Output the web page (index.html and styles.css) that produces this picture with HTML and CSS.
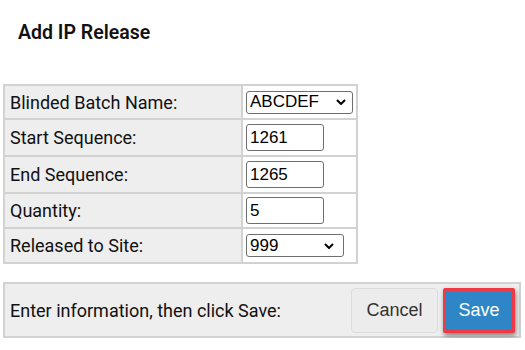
FILE: index.html
```html
<!DOCTYPE html>
<html>
<head>
<meta charset="utf-8">
<link rel="stylesheet" href="styles.css">
</head>
<body>
<h1 class="title">Add IP Release</h1>
<table class="form-table">
  <tr class="row-select">
    <td class="label">Blinded Batch Name:</td>
    <td class="field"><span class="select select-batch">ABCDEF<svg class="chev" viewBox="0 0 10 6"><path d="M1 1l4 4 4-4" fill="none" stroke="#000" stroke-width="2"/></svg></span></td>
  </tr>
  <tr class="row-input">
    <td class="label">Start Sequence:</td>
    <td class="field"><span class="input">1261</span></td>
  </tr>
  <tr class="row-input">
    <td class="label">End Sequence:</td>
    <td class="field"><span class="input">1265</span></td>
  </tr>
  <tr class="row-input2">
    <td class="label">Quantity:</td>
    <td class="field"><span class="input">5</span></td>
  </tr>
  <tr class="row-select2">
    <td class="label">Released to Site:</td>
    <td class="field"><span class="select select-site">999<svg class="chev" viewBox="0 0 10 6"><path d="M1 1l4 4 4-4" fill="none" stroke="#000" stroke-width="2"/></svg></span></td>
  </tr>
</table>
<div class="footer">
  <span class="footer-text">Enter information, then click Save:</span>
  <div class="buttons">
    <span class="btn btn-cancel">Cancel</span>
    <span class="btn btn-save">Save</span>
  </div>
</div>
</body>
</html>
```
FILE: styles.css
```css
html, body {
  margin: 0;
  padding: 0;
  background: #fff;
}
body {
  font-family: Roboto, "Liberation Sans", sans-serif;
  color: #111;
  padding-left: 3px;
}
.title {
  font-size: 19.5px;
  font-weight: 600;
  margin: 0;
  padding: 22px 0 0 15px;
  height: 84px;
  box-sizing: border-box;
  line-height: 22px;
}
.form-table {
  border-collapse: collapse;
  border: 2px solid #d2d2d2;
  width: 355px;
}
.form-table td {
  border: 2px solid #d2d2d2;
  padding: 0;
}
.label {
  background: #eeeeee;
  font-size: 18px;
  padding-left: 5px !important;
  width: 231px;
}
.field {
  background: #fff;
  padding-left: 3px !important;
}
.row-select td { height: 32px; }
.row-input td { height: 35px; }
.row-input2 td { height: 33px; }
.row-select2 td { height: 33px; }
.input, .select {
  display: flex;
  align-items: center;
  box-sizing: border-box;
  font-family: "Liberation Sans", Arial, sans-serif;
  font-size: 17px;
  color: #000;
  border: 1px solid #6f6f6f;
  border-radius: 3px;
  padding-left: 3px;
  background: #fff;
}
.input {
  width: 78px;
  height: 27px;
}
.select {
  height: 23px;
  justify-content: space-between;
  padding-right: 6px;
}
.select-batch { width: 107px; }
.select-site { width: 98px; padding-right: 9px; }
.chev {
  width: 10px;
  height: 6px;
}
.footer {
  margin-top: 18px;
  width: 518px;
  height: 56px;
  box-sizing: border-box;
  border: 2px solid #d2d2d2;
  background: #eeeeee;
  display: flex;
  align-items: center;
  justify-content: space-between;
  padding: 0 4px 0 5px;
}
.footer-text {
  font-size: 18px;
}
.buttons {
  display: flex;
  gap: 5px;
  align-items: center;
}
.btn {
  display: flex;
  align-items: center;
  justify-content: center;
  box-sizing: border-box;
  height: 45px;
  font-family: "Liberation Sans", Arial, sans-serif;
  font-size: 18px;
  border-radius: 4px;
}
.btn-cancel {
  width: 87px;
  border: 1px solid #dcdcdc;
  background: #ececec;
  color: #333;
}
.btn-save {
  width: 72px;
  background: #2e86c6;
  color: #fff;
  border: 3px solid #ee3a45;
  border-radius: 2px;
  box-shadow: 1px 3px 5px rgba(0,0,0,0.45);
}
```
